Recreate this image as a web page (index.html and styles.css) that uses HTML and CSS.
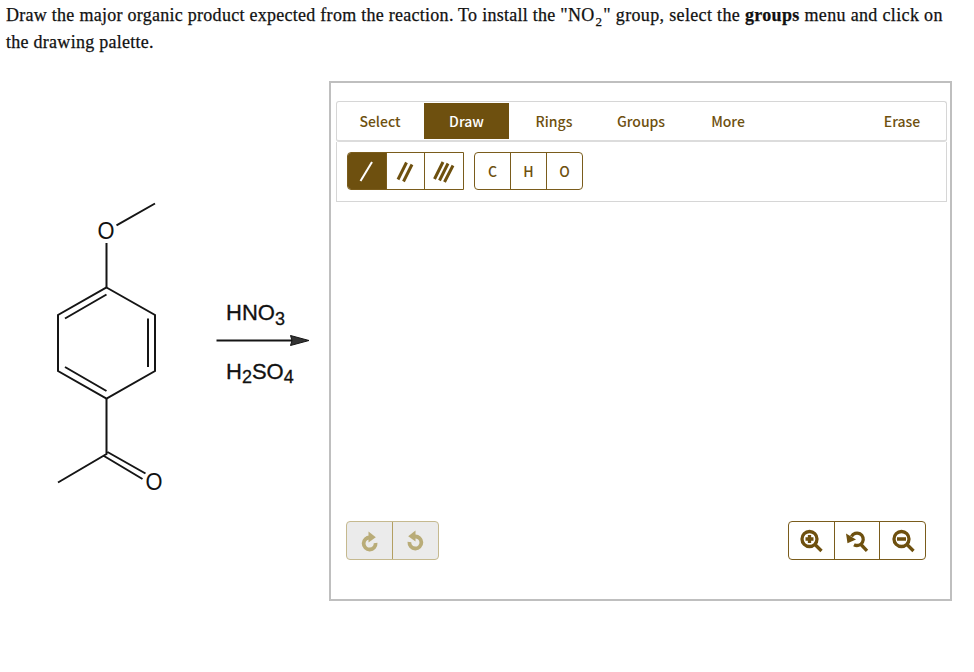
FILE: index.html
```
<!DOCTYPE html>
<html lang="en">

<head>
	<meta charset="utf-8">
	<title>Organic Product Drawing</title>
	<link rel="stylesheet" href="styles.css">
</head>
<body>
	<div class="question">
		<div class="line1">Draw the major organic product expected from the reaction. To install the "NO<sub>2</sub><span class="tail">" group, select the <b>groups</b> menu and click on</span></div>
		<div class="line2">the drawing palette.</div>
	</div>
	<div class="exercise">
		<svg class="reaction" width="329" height="520" viewBox="0 81 329 520">
			<!-- methoxy group -->
			<path class="bond" d="M116.5 225.3L155 203.5M106.5 243v44.5"/>
			<text class="atom" x="106" y="239.4" text-anchor="middle" textLength="17" lengthAdjust="spacingAndGlyphs">O</text>
			<!-- ring -->
			<path class="bond" d="M106.5 287.5L155 315v56L106.5 398.5L58 371v-56z"/>
			<path class="bond" d="M106.5 294.5L65 318.5M148 318.5v48.5M65 367L106.5 391"/>
			<!-- acetyl group -->
			<path class="bond" d="M106.5 398.5V454L58 482.5M107.5 452L145.5 473.5M104 456L142.5 479"/>
			<text class="atom" x="154" y="490.4" text-anchor="middle" textLength="17" lengthAdjust="spacingAndGlyphs">O</text>
			<!-- reagents -->
			<text class="reagent" x="226" y="320.4">HNO<tspan class="small" dy="4.5">3</tspan></text>
			<path class="bond" d="M216.5 340.5H294"/>
			<path class="arrow" d="M290.5 335.5L309 340.5L290.5 345.5L292 340.5z"/>
			<text class="reagent" x="226" y="378.7">H<tspan class="small" dy="4.5">2</tspan><tspan dy="-4.5">SO</tspan><tspan class="small" dy="4.5">4</tspan></text>
		</svg>
		<div class="editor">
			<div class="tabs">
				<div class="tab select">Select</div>
				<div class="tab draw active">Draw</div>
				<div class="tab rings">Rings</div>
				<div class="tab groups">Groups</div>
				<div class="tab more">More</div>
				<div class="tab erase">Erase</div>
			</div>
			<div class="tools">
				<div class="btns bonds">
					<div class="btn active"><svg width="36" height="36"><path class="thin" d="M11.5 28L23 9"/></svg></div>
					<div class="btn"><svg width="36" height="36"><path d="M10 26.5L18.5 9.5M15.5 28.5L24 11.5"/></svg></div>
					<div class="btn"><svg width="36" height="36"><path d="M8.5 26L17 9M13.5 27.5L22 10.5M18.5 29L27 12.5"/></svg></div>
				</div>
				<div class="btns atoms">
					<div class="btn">C</div>
					<div class="btn">H</div>
					<div class="btn">O</div>
				</div>
			</div>
			<div class="footer">
				<div class="btns history">
					<div class="btn">
						<svg width="24" height="24" viewBox="0 0 24 24"><path d="M12 8.5A6 6 0 1 0 17.6 14"/><path class="solid" d="M10.5 2.500L17.800 8.200L10.500 13.500z"/></svg>
					</div>
					<div class="btn">
						<svg width="24" height="24" viewBox="0 0 24 24"><path d="M11 7.5A6 6 0 1 1 5.4 13"/><path class="solid" d="M11.500 1.500L4.200 7.200L11.500 12.500z"/></svg>
					</div>
				</div>
				<div class="btns zoom">
					<div class="btn">
						<svg width="26" height="26" viewBox="0 0 26 26"><circle cx="11.5" cy="11" r="7.5"/><path d="M16.5 16L23.5 23M11.5 7v8M7.5 11h8"/></svg>
					</div>
					<div class="btn">
						<svg width="26" height="26" viewBox="0 0 26 26"><path d="M7.5 8.5A6.2 6.2 0 1 1 10 16.7M16.5 16L23 22.8"/><path class="solid" d="M2 5.5L3.5 15.3L12 11.5z"/></svg>
					</div>
					<div class="btn">
						<svg width="26" height="26" viewBox="0 0 26 26"><circle cx="11.5" cy="11" r="7.5"/><path d="M16.5 16L23.5 23M7 11h9"/></svg>
					</div>
				</div>
			</div>
		</div>
	</div>
</body>

</html>
```
FILE: styles.css
```
body { margin: 0; background: #fff; }
.question{ height: 81px; padding-left: 6px; box-sizing: border-box; padding-top: 2px; color: #111; font: 18px/27px "Liberation Serif", serif; letter-spacing: 0.27px; white-space: nowrap; -webkit-text-stroke: 0.25px #111; }
.question sub{ font-size: 13px; line-height: 0; vertical-align: -5px; margin: 0 1px; }
.tail{ letter-spacing: 0.34px; }
.exercise{ display: flex; }
.reaction{ display: block; flex: none; }
.bond{ fill: none; stroke: #151515; stroke-width: 2; }
.arrow{ fill: #333; stroke: #151515; stroke-width: 1; }
.atom{ font: 23.5px "Liberation Sans", sans-serif; fill: #111; }
.reagent{ font: 22px "Liberation Sans", sans-serif; fill: #111; stroke: #111; stroke-width: 0.3; }
.small{ font-size: 18px; }

.editor{ box-sizing: border-box; width: 623px; height: 520px; padding: 18px 3px 0 5px; border: 2px solid #bfbfbf; display: flex; flex-direction: column; font: 500 14px "Noto Sans CJK SC", sans-serif; color: #6e500f; }
.tabs{ display: flex; height: 37px; padding-top: 1px; border: 1px solid #d6d6d6; border-bottom: 2px solid #dcdcdc; border-radius: 3px; }
.tab{ display: flex; align-items: center; justify-content: center; height: 36px; }
.select{ width: 86px; padding-right: 1px; }
.draw{ width: 85px; }
.rings{ width: 90px; }
.groups{ width: 84px; }
.more{ width: 90px; }
.erase{ width: 88px; margin-left: auto; }
.active{ background: #6e500f; color: #fff; }
.tools{ display: flex; gap: 10px; height: 49px; padding: 10px 10px 0; border: 1px solid #d6d6d6; border-top: 0; }
.btns{ display: flex; box-sizing: border-box; height: 39px; border: 1px solid #7a5c1c; border-radius: 4px; overflow: hidden; }
.btn{ flex: 1; display: flex; align-items: center; justify-content: center; }
.btn + .btn{ border-left: 1px solid #7a5c1c; }
.btn svg{ display: block; fill: none; stroke: #6e500f; stroke-width: 3.3; }
.btn .thin{ stroke: #fff; stroke-width: 2; }
.btn .solid{ fill: #6e500f; stroke: none; }
.tools .btns{ height: 38px; }
.bonds{ width: 117px; border-radius: 4px 0 0 4px; }
.bonds svg{ stroke-width: 3; }
.atoms{ width: 109px; }
.footer{ display: flex; justify-content: space-between; margin: auto 21px 39px 10px; }
.history{ width: 93px; background: #ebebeb; border-color: #c5b98f; }
.history .btn + .btn{ border-color: #b39f62; }
.history .btn svg{ stroke: #b9ac78; stroke-width: 3.8; }
.history .btn .solid{ fill: #b9ac78; }
.zoom{ width: 138px; }
```
